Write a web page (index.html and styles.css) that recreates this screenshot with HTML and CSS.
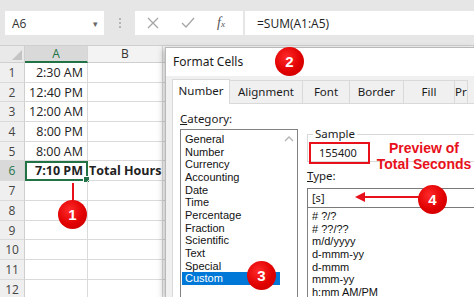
FILE: index.html
```html
<!DOCTYPE html>
<html lang="en">
<head>
    <meta charset="UTF-8">
    <title>Format Cells - Custom [s]</title>
    <link rel="stylesheet" href="styles.css">
</head>
<body>
    <div class="toolbar">
        <div class="name-box">A6<span class="caret">&#9662;</span></div>
        <div class="grip"><i></i><i></i><i></i></div>
        <div class="fx-buttons">
            <svg width="12" height="12" viewBox="0 0 12 12"><path d="M1 1 L11 11 M11 1 L1 11" stroke="#a6a6a6" stroke-width="1.3"/></svg>
            <svg width="14" height="12" viewBox="0 0 14 12"><path d="M1 6 L5 10 L13 1" stroke="#a6a6a6" stroke-width="1.3" fill="none"/></svg>
            <span class="fx">f<small>x</small></span>
        </div>
        <div class="formula">=SUM(A1:A5)</div>
    </div>

    <div class="sheet">
        <div class="corner"><span></span></div>
        <div class="col-head active">A</div>
        <div class="col-head">B</div>
        <div class="col-head"></div>

        <div class="row-head">1</div><div class="cell num">2:30 AM</div><div class="cell"></div><div class="cell"></div>
        <div class="row-head">2</div><div class="cell num">12:40 PM</div><div class="cell"></div><div class="cell"></div>
        <div class="row-head">3</div><div class="cell num">12:00 AM</div><div class="cell"></div><div class="cell"></div>
        <div class="row-head">4</div><div class="cell num">8:00 PM</div><div class="cell"></div><div class="cell"></div>
        <div class="row-head">5</div><div class="cell num">8:00 AM</div><div class="cell"></div><div class="cell"></div>
        <div class="row-head active">6</div><div class="cell num bold selected">7:10 PM<span class="handle"></span></div><div class="cell bold overflow">Total Hours</div><div class="cell"></div>
        <div class="row-head">7</div><div class="cell"></div><div class="cell"></div><div class="cell"></div>
        <div class="row-head">8</div><div class="cell"></div><div class="cell"></div><div class="cell"></div>
        <div class="row-head">9</div><div class="cell"></div><div class="cell"></div><div class="cell"></div>
        <div class="row-head">10</div><div class="cell"></div><div class="cell"></div><div class="cell"></div>
        <div class="row-head">11</div><div class="cell"></div><div class="cell"></div><div class="cell"></div>
        <div class="row-head">12</div><div class="cell"></div><div class="cell"></div><div class="cell"></div>
    </div>

    <div class="dialog">
        <div class="dialog-title">Format Cells</div>
        <div class="dialog-body">
            <div class="tabs">
                <div class="tab active">Number</div>
                <div class="tab w-align">Alignment</div>
                <div class="tab w-font">Font</div>
                <div class="tab w-border">Border</div>
                <div class="tab w-fill">Fill</div>
                <div class="tab">Pr</div>
            </div>
            <div class="panel">
                <div class="category">
                    <div class="label"><u>C</u>ategory:</div>
                    <div class="listbox">
                        <ul class="items">
                            <li>General</li>
                            <li>Number</li>
                            <li>Currency</li>
                            <li>Accounting</li>
                            <li>Date</li>
                            <li>Time</li>
                            <li>Percentage</li>
                            <li>Fraction</li>
                            <li>Scientific</li>
                            <li>Text</li>
                            <li>Special</li>
                            <li class="picked">Custom</li>
                        </ul>
                        <div class="scroll">
                            <svg width="10" height="6" viewBox="0 0 10 6"><path d="M1 5 L5 1 L9 5" stroke="#b4b4b4" stroke-width="1.3" fill="none"/></svg>
                        </div>
                    </div>
                </div>
                <div class="format">
                    <div class="sample">
                        <span class="legend">Sample</span>
                        <div class="sample-value">155400</div>
                    </div>
                    <div class="label type-label"><u>T</u>ype:</div>
                    <div class="type-input">[s]</div>
                    <ul class="codes">
                        <li># ?/?</li>
                        <li># ??/??</li>
                        <li>m/d/yyyy</li>
                        <li>d-mmm-yy</li>
                        <li>d-mmm</li>
                        <li>mmm-yy</li>
                        <li>h:mm AM/PM</li>
                    </ul>
                </div>
            </div>
        </div>
    </div>

    <!-- annotations over the screenshot -->
    <div class="note">Preview of<br>Total Seconds</div>
    <div class="pointer-line"></div>
    <div class="arrow"><span class="head"></span></div>
    <div class="badge b1">1</div>
    <div class="badge b2">2</div>
    <div class="badge b3">3</div>
    <div class="badge b4">4</div>
</body>
</html>
```

FILE: styles.css
```css
html {
    overflow: hidden;
}

body {
    margin: 0;
    width: 474px;
    height: 297px;
    overflow: hidden;
    position: relative;
    background: #fff;
    font-family: "Open Sans", "Noto Sans", sans-serif;
    color: #222;
}

/* formula bar */
.toolbar {
    height: 46px;
    box-sizing: border-box;
    background: #e6e6e6;
    border-bottom: 1px solid #cfcfcf;
    display: flex;
    align-items: flex-start;
    padding: 11px 0 0 5px;
}

.name-box,
.fx-buttons,
.formula {
    height: 24px;
    background: #fff;
    box-sizing: border-box;
    display: flex;
    align-items: center;
    font-size: 12px;
}

.name-box {
    width: 99px;
    padding: 0 6px 0 7px;
    justify-content: space-between;
    color: #333;
}

.caret {
    color: #666;
    font-size: 9px;
}

.grip {
    width: 31px;
    height: 24px;
    display: flex;
    flex-direction: column;
    align-items: center;
    justify-content: center;
    gap: 2px;
}

.grip i {
    width: 2px;
    height: 2px;
    background: #b5b5b5;
}

.fx-buttons {
    width: 108px;
    padding-left: 12px;
    gap: 22px;
}

.fx {
    font-family: "Liberation Serif", serif;
    font-style: italic;
    font-size: 14px;
    color: #555;
}

.fx small {
    font-size: 9px;
}

.formula {
    flex: 1;
    margin-left: 2px;
    padding-left: 12px;
    color: #222;
}

/* worksheet */
.sheet {
    display: grid;
    grid-template-columns: 25px 63px 75px 1fr;
    grid-template-rows: 17px;
    grid-auto-rows: 19.7px;
    font-size: 12.5px;
}

.corner {
    background: #e9e9e9;
    border-right: 1px solid #cfcfcf;
    border-bottom: 1px solid #cfcfcf;
    position: relative;
}

.corner span {
    position: absolute;
    right: 2px;
    bottom: 2px;
    border-left: 10px solid transparent;
    border-bottom: 10px solid #c4c4c4;
}

.col-head {
    background: #f3f3f3;
    border-right: 1px solid #d6d6d6;
    border-bottom: 1px solid #cfcfcf;
    text-align: center;
    font-size: 12px;
    line-height: 16px;
    color: #333;
}

.col-head.active {
    background: #d9d9d9;
    color: #217346;
    border-bottom: 2px solid #217346;
}

.row-head {
    background: #efefef;
    border-right: 1px solid #cfcfcf;
    border-bottom: 1px solid #dadada;
    text-align: center;
    font-size: 12px;
    line-height: 19px;
    color: #444;
}

.row-head.active {
    background: #d9d9d9;
    color: #217346;
}

.cell {
    border-right: 1px solid #dadada;
    border-bottom: 1px solid #dadada;
    line-height: 19px;
    padding: 0 4px;
    white-space: nowrap;
    position: relative;
}

.cell.num {
    text-align: right;
}

.cell.bold {
    font-weight: bold;
}

.cell.overflow {
    padding-left: 1px;
    overflow: visible;
}

.cell.selected {
    outline: 2px solid #217346;
    outline-offset: -2px;
}

.handle {
    position: absolute;
    right: -3px;
    bottom: -3px;
    width: 5px;
    height: 5px;
    background: #217346;
    border: 1px solid #fff;
}

/* dialog window */
.dialog {
    position: absolute;
    left: 165px;
    top: 47px;
    right: 0;
    bottom: 0;
    overflow: hidden;
    background: #f0f0f0;
    border: 1px solid #b9b9b9;
    border-right: none;
    border-bottom: none;
    box-shadow: -2px 2px 6px rgba(0, 0, 0, 0.25);
    font-family: "Noto Sans", sans-serif;
    font-size: 11px;
    color: #1a1a1a;
}

.dialog-title {
    height: 28px;
    background: #fff;
    padding-left: 7px;
    line-height: 27px;
    font-size: 12px;
}

.dialog-body {
    padding: 3px 0 0 6px;
}

.tabs {
    display: flex;
    height: 24px;
}

.tab {
    box-sizing: border-box;
    border: 1px solid #d9d9d9;
    border-left: none;
    border-bottom: none;
    background: #f0f0f0;
    text-align: center;
    line-height: 22px;
    font-size: 11.5px;
    margin-top: 1px;
}

.tab.active {
    width: 58px;
    background: #fff;
    border-left: 1px solid #d9d9d9;
    margin-top: 0;
    height: 25px;
    position: relative;
    z-index: 1;
}

.w-align { width: 73px; }
.w-font { width: 47px; }
.w-border { width: 54px; }
.w-fill { width: 51px; }

.panel {
    background: #fff;
    border-top: 1px solid #d9d9d9;
    border-left: 1px solid #d9d9d9;
    height: 200px;
    display: flex;
    gap: 9px;
    padding: 7px 0 0 7px;
}

.label {
    height: 16px;
    line-height: 16px;
    font-size: 11.5px;
}

.listbox {
    margin-top: 2px;
    width: 118px;
    height: 180px;
    box-sizing: border-box;
    border: 1px solid #828282;
    display: flex;
}

.items,
.codes {
    list-style: none;
    margin: 0;
    padding: 3px 1px 0;
    font-family: "Liberation Sans", Arial, sans-serif;
    font-size: 11px;
    line-height: 12.65px;
    color: #111;
}

.items {
    flex: 1;
}

.items li {
    padding-left: 3px;
}

.items li.picked {
    background: #0078d7;
    color: #fff;
}

.scroll {
    width: 16px;
    display: flex;
    justify-content: center;
    padding-top: 6px;
}

.format {
    flex: 1;
    padding-top: 23px;
}

.sample {
    border: 1px solid #d9d9d9;
    border-right: none;
    height: 28px;
    position: relative;
    padding: 7px 0 0 1px;
    box-sizing: border-box;
}

.legend {
    position: absolute;
    left: 5px;
    top: -9px;
    background: #fff;
    padding: 0 2px;
    line-height: 16px;
    font-size: 11.5px;
}

.sample-value {
    width: 61px;
    height: 22px;
    box-sizing: border-box;
    border: 2px solid #e8101a;
    line-height: 18px;
    padding-left: 8px;
    font-size: 11px;
}

.type-label {
    margin-top: 6px;
}

.type-input {
    margin-top: 4px;
    height: 20px;
    box-sizing: border-box;
    border: 1px solid #7a7a7a;
    border-right: none;
    line-height: 18px;
    padding-left: 4px;
}

.codes {
    border-left: 1px solid #828282;
    height: 100px;
    padding: 2px 0 0 4px;
}

/* red annotations */
.note {
    position: absolute;
    left: 374px;
    top: 140px;
    width: 100px;
    text-align: center;
    font-family: "Liberation Sans", Arial, sans-serif;
    font-weight: bold;
    font-size: 14px;
    line-height: 16px;
    color: #e8101a;
}

.pointer-line {
    position: absolute;
    left: 72px;
    top: 183px;
    width: 2px;
    height: 18px;
    background: #e8101a;
}

.arrow {
    position: absolute;
    left: 364px;
    top: 196px;
    width: 56px;
    height: 2px;
    background: #e8101a;
}

.arrow .head {
    position: absolute;
    left: -9px;
    top: -4px;
    border-top: 5px solid transparent;
    border-bottom: 5px solid transparent;
    border-right: 10px solid #e8101a;
}

.badge {
    position: absolute;
    width: 29px;
    height: 29px;
    border-radius: 50%;
    background: radial-gradient(circle at 40% 35%, #ff2a2a, #e00000 55%, #c80000);
    color: #fff;
    font-family: "Liberation Sans", Arial, sans-serif;
    font-weight: bold;
    font-size: 15px;
    line-height: 29px;
    text-align: center;
}

.b1 { left: 58px; top: 200px; }
.b2 { left: 275px; top: 47px; }
.b3 { left: 247px; top: 261px; }
.b4 { left: 418px; top: 185px; }
```
